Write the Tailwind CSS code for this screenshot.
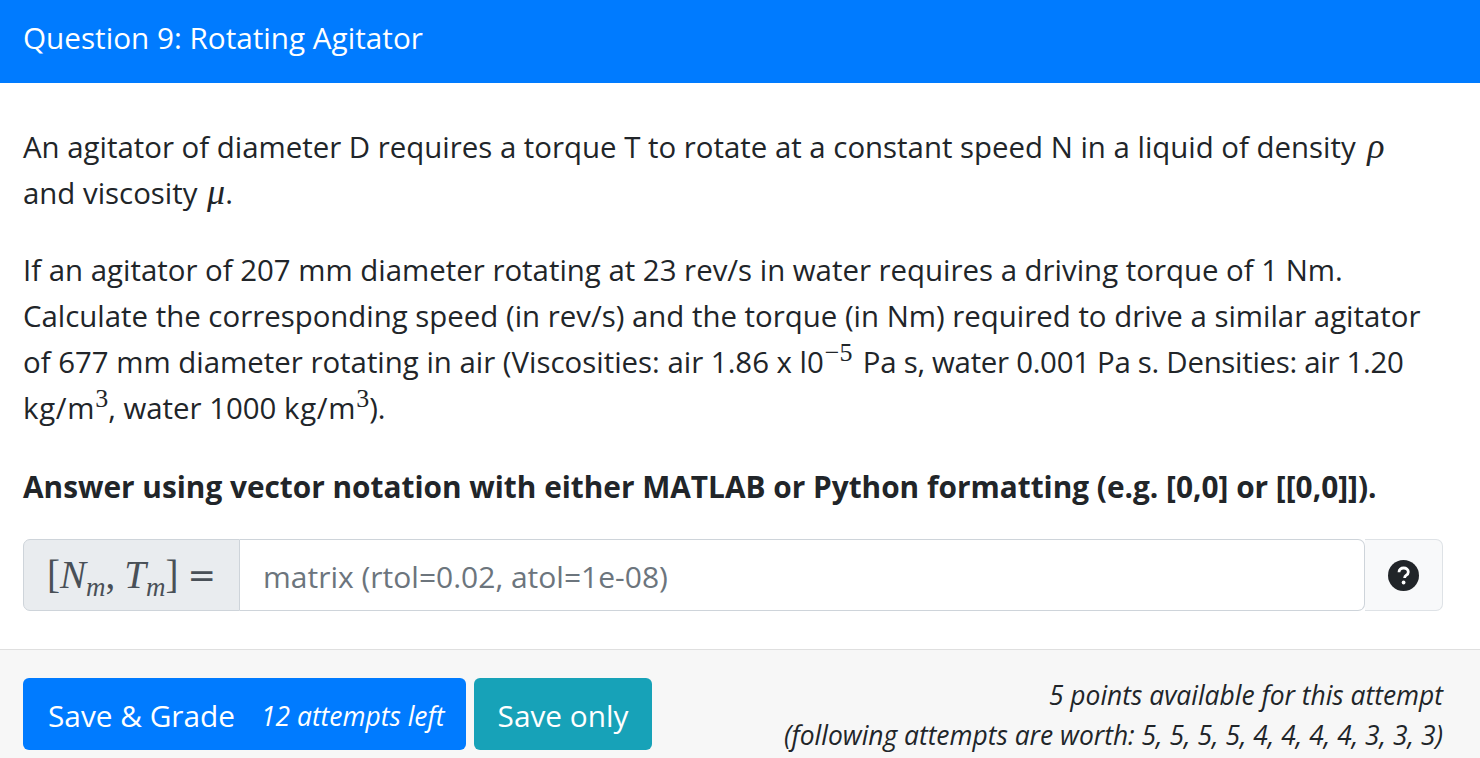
<!DOCTYPE html>
<html lang="en">
<head>
  <meta charset="UTF-8" />
  <title>Question 9: Rotating Agitator</title>
  <script src="https://cdn.jsdelivr.net/npm/@tailwindcss/browser@4"></script>
</head>
<body class="bg-white h-[758px] overflow-hidden font-['Open_Sans',sans-serif] text-[#212529] text-[29.4px] leading-[46px]">

  <div class="bg-[#007bff] text-white h-[83px] px-[23px] flex items-center pb-[7px]">
    <h1 class="whitespace-nowrap text-[29.7px]">Question 9: Rotating Agitator</h1>
  </div>

  <div class="h-[566px] px-[23px] pt-[41px] whitespace-nowrap">
    <p class="mb-[31px]">An agitator of diameter D requires a torque T to rotate at a constant speed N in a liquid of density <i class="ml-[4px] font-['Liberation_Serif',serif] text-[36px] leading-none">ρ</i><br>and viscosity <i class="ml-[2px] font-['Liberation_Serif',serif] text-[36px] leading-none">μ</i>.</p>
    <p class="mb-[33px]">If an agitator of 207 mm diameter rotating at 23 rev/s in water requires a driving torque of 1 Nm.<br>Calculate the corresponding speed (in rev/s) and the torque (in Nm) required to drive a similar agitator<br>of 677 mm diameter rotating in air (Viscosities: air 1.86 x l0<span class="font-['Liberation_Serif',serif] text-[26px] leading-none relative -top-[12px] ml-[1px]">−5</span><span class="ml-[3px] tracking-[-0.28px]"> Pa s, water 0.001 Pa s. Densities: air 1.20</span><br><span class="tracking-[0.7px]">kg/m</span><span class="font-['Liberation_Serif',serif] text-[26px] leading-none relative -top-[12px]">3</span>, water 1000 <span class="tracking-[0.7px]">kg/m</span><span class="font-['Liberation_Serif',serif] text-[26px] leading-none relative -top-[12px]">3</span>).</p>
    <p class="font-bold mb-[29px] text-[29.8px]">Answer using vector notation with either MATLAB or Python formatting (e.g. [0,0] or [[0,0]]).</p>

    <div class="flex h-[72px] w-[1420px]">
      <div class="w-[217px] bg-[#e9ecef] border border-[#ced4da] rounded-l-[7px] flex items-center justify-center font-['Liberation_Serif',serif] text-[39px] text-[#495057]">
        <span class="flex items-center gap-[3px]">
          <span>[<i>N</i><i class="text-[27px] relative top-[8px] leading-none">m</i>,</span>
          <span class="ml-[6px]"><i>T</i><i class="text-[27px] relative top-[8px] leading-none">m</i>]</span>
          <span class="ml-[6px] font-['DejaVu_Serif',serif] text-[34px] font-light">=</span>
        </span>
      </div>
      <div class="flex-1 bg-white border-y border-r border-[#ced4da] rounded-r-[7px] flex items-center pl-[23px] pt-[3px] text-[#6c757d] text-[30px]">matrix (rtol=0.02, atol=1e-08)</div>
      <div class="w-[78px] bg-[#f8f9fa] border-y border-r border-[#dee2e6] rounded-r-[7px] flex items-center justify-center">
        <svg class="w-[31px] h-[31px]" viewBox="0 0 31 31">
          <circle cx="15.5" cy="15.5" r="15.5" fill="#212529" />
          <path d="M11 12.2c0-2.6 2-4.2 4.7-4.2 2.6 0 4.6 1.5 4.6 3.9 0 1.8-1 2.7-2.2 3.5-1 .7-1.4 1.1-1.4 2.1v.5" fill="none" stroke="#fff" stroke-width="2.8" />
          <circle cx="15.6" cy="22.5" r="1.9" fill="#fff" />
        </svg>
      </div>
    </div>
  </div>

  <div class="h-[109px] bg-[#f7f7f7] border-t border-[#dfdfdf] px-[23px] pt-[28px] flex justify-between whitespace-nowrap">
    <div class="flex gap-[8px] text-white h-[72px] text-[29.8px]">
      <div class="w-[443px] bg-[#007bff] rounded-[6px] flex items-center pl-[25px] pt-[3px]">
        <span>Save &amp; Grade</span><i class="ml-[26px] text-[26.4px]">12 attempts left</i>
      </div>
      <div class="w-[178px] bg-[#17a2b8] rounded-[6px] flex items-center justify-center pt-[3px]">Save only</div>
    </div>
    <div class="text-right italic text-[26.4px] leading-[40px] -mt-[3px] pr-[14px]">
      <p>5 points available for this attempt</p>
      <p>(following attempts are worth: 5, 5, 5, 5, 4, 4, 4, 4, 3, 3, 3)</p>
    </div>
  </div>

</body>
</html>
